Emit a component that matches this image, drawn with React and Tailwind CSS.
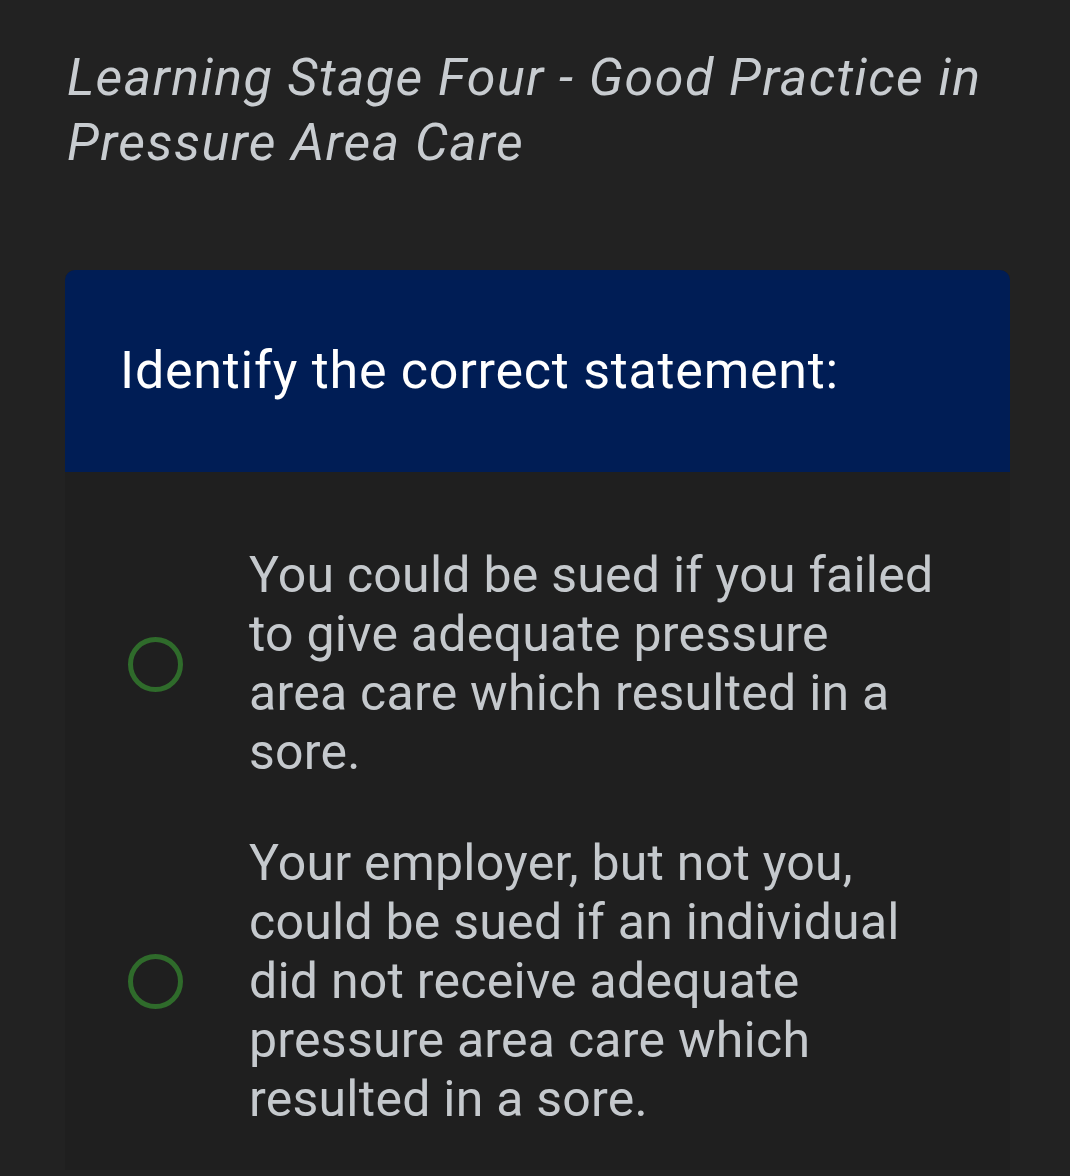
export default function App() {
  const options = [
    "You could be sued if you failed to give adequate pressure area care which resulted in a sore.",
    "Your employer, but not you, could be sued if an individual did not receive adequate pressure area care which resulted in a sore.",
  ];
  return (
    <div className="h-[1176px] bg-[#222222] font-['Roboto',sans-serif] pt-[45px] overflow-hidden">
      <h1 className="ml-[67px] mr-[40px] text-[52px] leading-[65px] italic text-[#c8ccd0] tracking-[1.45px]">
        Learning Stage Four - Good Practice in Pressure Area Care
      </h1>
      <div className="ml-[65px] w-[945px] mt-[95px] bg-[#1f1f1f] rounded-t-[10px] min-h-[900px]">
        <div className="bg-[#001d55] rounded-t-[10px] h-[202px] flex items-center pl-[55px]">
          <h2 className="text-[52px] leading-[60px] text-white tracking-[0.75px]">Identify the correct statement:</h2>
        </div>
        <div className="pt-[74px] flex flex-col gap-[52px]">
          {options.map((o) => (
            <label key={o} className="flex items-center">
              <span className="ml-[63px] w-[55px] h-[55px] rounded-full border-[5px] border-[#2f6b2b] shrink-0" />
              <span className="ml-[66px] w-[687px] text-[50px] leading-[59px] text-[#c5c9cd] tracking-[0.25px]">{o}</span>
            </label>
          ))}
        </div>
      </div>
    </div>
  );
}
